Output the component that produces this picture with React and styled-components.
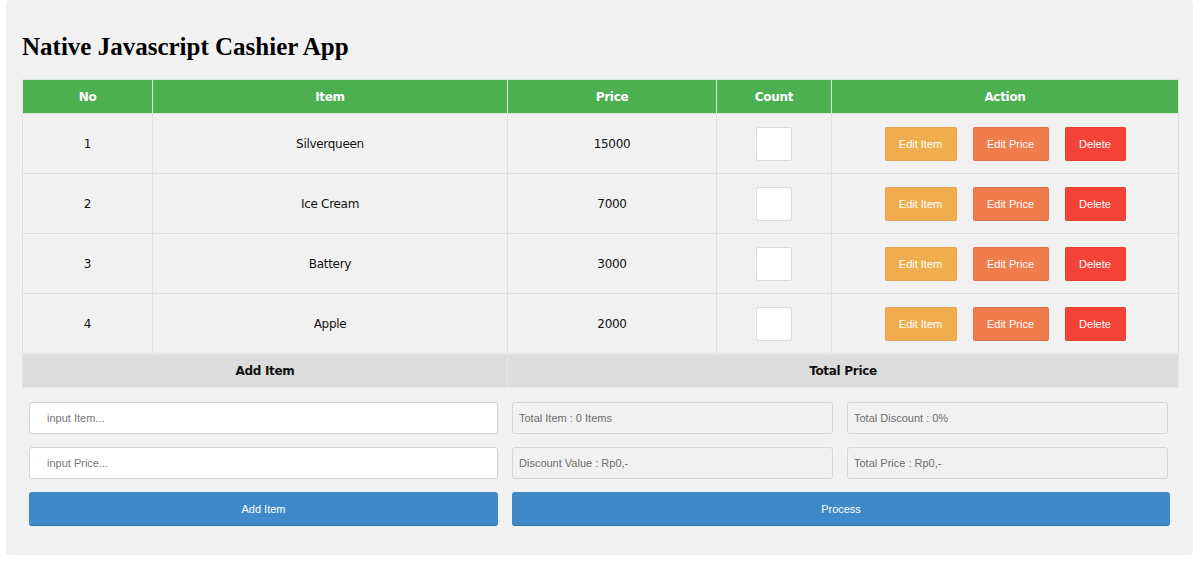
import React from 'react';
import styled, { createGlobalStyle } from 'styled-components';

const GlobalStyle = createGlobalStyle`
  body {
    margin: 0;
    background: #fff;
    font-family: "DejaVu Sans", sans-serif;
  }
`;

const Panel = styled.div`
  margin: 0 7px 0 6px;
  width: 1187px;
  box-sizing: border-box;
  background: #f1f1f1;
  border-radius: 4px;
  padding: 32px 15px 29px 16px;
`;

const Title = styled.h2`
  margin: 0 0 17px;
  font-family: "Liberation Serif", serif;
  font-weight: bold;
  font-size: 25px;
  line-height: 30px;
  color: #000;
`;

const Table = styled.table`
  width: 1156px;
  border-collapse: collapse;
  table-layout: fixed;
  font-family: "DejaVu Sans", sans-serif;
  font-size: 12px;
  letter-spacing: -0.3px;
`;

const Th = styled.th`
  background: #4caf50;
  color: #fff;
  font-weight: bold;
  height: 33px;
  padding: 0;
  border: 1px solid #d8ead8;
  text-align: center;
`;

const Td = styled.td`
  height: 59px;
  padding: 0;
  text-align: center;
  color: #111;
  border: 1px solid #dedede;
`;

const FootCell = styled.td`
  background: #dcdcdc;
  height: 32px;
  padding: 0;
  text-align: center;
  font-weight: bold;
  color: #111;
  border: 1px solid #e6e6e6;
  border-top: 2px solid #e6e6e6;
`;

const CountBox = styled.input`
  width: 36px;
  height: 34px;
  box-sizing: border-box;
  border: 1px solid #dadada;
  border-radius: 3px;
  background: #fff;
  display: block;
  margin: 0 auto;
`;

const Actions = styled.div`
  display: flex;
  justify-content: center;
  gap: 16px;
`;

const colors = {
  item: '#f0ad4e',
  price: '#f07c4e',
  del: '#f44336',
};

const ActionButton = styled.button`
  width: ${(p) => p.$w}px;
  height: 34px;
  border: 1px solid rgba(0, 0, 0, 0.06);
  border-radius: 2px;
  background: ${(p) => colors[p.$kind]};
  color: #fff;
  font-family: "Liberation Sans", Arial, sans-serif;
  font-size: 11px;
  letter-spacing: 0;
  padding: 0;
`;

const FormArea = styled.div`
  display: grid;
  grid-template-columns: 469px 658px;
  column-gap: 14px;
  padding: 14px 8px 0 7px;
`;

const Column = styled.div`
  display: flex;
  flex-direction: column;
  gap: 13px;
`;

const FieldRow = styled.div`
  display: grid;
  grid-template-columns: 321px 321px;
  column-gap: 14px;
`;

const TextInput = styled.input`
  height: 32px;
  box-sizing: border-box;
  border: 1px solid #d2d2d2;
  border-radius: 3px;
  background: #fff;
  padding: 0 17px;
  font-family: "Liberation Sans", Arial, sans-serif;
  font-size: 11px;
  color: #333;
  &::placeholder {
    color: #777;
  }
`;

const Readout = styled.div`
  height: 32px;
  box-sizing: border-box;
  border: 1px solid #d6d6d6;
  border-radius: 3px;
  background: #f1f1f1;
  padding: 0 6px;
  display: flex;
  align-items: center;
  font-family: "Liberation Sans", Arial, sans-serif;
  font-size: 11px;
  color: #6d6d6d;
`;

const BlueButton = styled.button`
  height: 34px;
  border: none;
  border-bottom: 1px solid #2f73ad;
  border-radius: 3px;
  background: #3f89c8;
  color: #fff;
  font-family: "Liberation Sans", Arial, sans-serif;
  font-size: 11px;
`;

const items = [
  { name: 'Silverqueen', price: 15000 },
  { name: 'Ice Cream', price: 7000 },
  { name: 'Battery', price: 3000 },
  { name: 'Apple', price: 2000 },
];

export default function App() {
  return (
    <>
      <GlobalStyle />
      <Panel>
        <Title>Native Javascript Cashier App</Title>
        <Table>
          <colgroup>
            <col style={{ width: 130 }} />
            <col style={{ width: 355 }} />
            <col style={{ width: 209 }} />
            <col style={{ width: 115 }} />
            <col style={{ width: 347 }} />
          </colgroup>
          <thead>
            <tr>
              <Th>No</Th>
              <Th>Item</Th>
              <Th>Price</Th>
              <Th>Count</Th>
              <Th>Action</Th>
            </tr>
          </thead>
          <tbody>
            {items.map((it, i) => (
              <tr key={it.name}>
                <Td>{i + 1}</Td>
                <Td>{it.name}</Td>
                <Td>{it.price}</Td>
                <Td>
                  <CountBox type="text" />
                </Td>
                <Td>
                  <Actions>
                    <ActionButton $kind="item" $w={72}>Edit Item</ActionButton>
                    <ActionButton $kind="price" $w={76}>Edit Price</ActionButton>
                    <ActionButton $kind="del" $w={61}>Delete</ActionButton>
                  </Actions>
                </Td>
              </tr>
            ))}
            <tr>
              <FootCell colSpan={2}>Add Item</FootCell>
              <FootCell colSpan={3}>Total Price</FootCell>
            </tr>
          </tbody>
        </Table>
        <FormArea>
          <Column>
            <TextInput placeholder="input Item..." />
            <TextInput placeholder="input Price..." />
            <BlueButton>Add Item</BlueButton>
          </Column>
          <Column>
            <FieldRow>
              <Readout>Total Item : 0 Items</Readout>
              <Readout>Total Discount : 0%</Readout>
            </FieldRow>
            <FieldRow>
              <Readout>Discount Value : Rp0,-</Readout>
              <Readout>Total Price : Rp0,-</Readout>
            </FieldRow>
            <BlueButton>Process</BlueButton>
          </Column>
        </FormArea>
      </Panel>
    </>
  );
}
